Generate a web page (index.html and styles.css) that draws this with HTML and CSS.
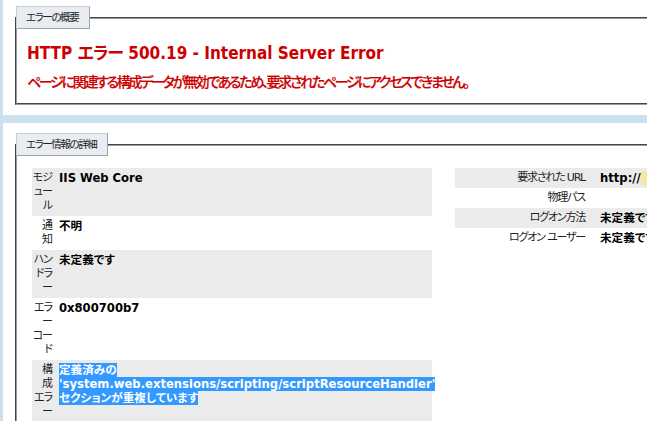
FILE: index.html
```html
<!DOCTYPE html>
<html lang="ja">
<head>
<meta charset="utf-8">
<title>IIS 詳細エラー - 500.19 - Internal Server Error</title>
<link rel="stylesheet" href="styles.css">
</head>
<body>
<div class="content">
  <div class="summary-container">
    <fieldset class="summary">
      <legend>エラーの概要</legend>
      <h2>HTTP <span class="jp">エラー</span> 500.19 - Internal Server Error</h2>
      <h3>ページに関連する構成データが無効であるため、要求されたページにアクセスできません。</h3>
    </fieldset>
  </div>
  <div class="content-container">
    <fieldset class="detail">
      <legend>エラー情報の詳細</legend>
      <div class="details">
        <div class="details-left">
          <table>
            <tr class="alt"><th>モジ<br>ュー<br>ル</th><td>IIS Web Core</td></tr>
            <tr><th>通<br>知</th><td>不明</td></tr>
            <tr class="alt"><th>ハン<br>ドラ<br>ー</th><td>未定義です</td></tr>
            <tr><th>エラ<br>ー<br>コー<br>ド</th><td>0x800700b7</td></tr>
            <tr class="alt"><th>構<br>成<br>エラ<br>ー</th><td class="keep"><span class="sel">定義済みの <span class="nw">'system.web.extensions/scripting/scriptResourceHandler'</span> セクションが重複しています</span></td></tr>
          </table>
        </div>
        <div class="details-right">
          <table>
            <tr class="alt"><th>要求された URL</th><td>http://<span class="redact">&nbsp;&nbsp;&nbsp;&nbsp;&nbsp;&nbsp;&nbsp;&nbsp;&nbsp;&nbsp;</span></td></tr>
            <tr><th>物理パス</th><td></td></tr>
            <tr class="alt"><th>ログオン方法</th><td>未定義です</td></tr>
            <tr><th>ログオン ユーザー</th><td>未定義です</td></tr>
          </table>
        </div>
      </div>
    </fieldset>
  </div>
</div>
</body>
</html>
```
FILE: styles.css
```css
html, body {
  margin: 0;
  padding: 0;
  overflow: hidden;
}
body {
  background: #cbe1ef;
  font-family: "DejaVu Sans", "Noto Sans CJK JP", sans-serif;
  font-size: 11px;
  color: #000;
  font-feature-settings: "palt";
}
.content {
  margin-left: 3px;
  width: 1200px;
}
.summary-container,
.content-container {
  background: #fff;
  padding: 10px;
}
.summary-container {
  padding-top: 6px;
}
.content-container {
  margin-top: 8px;
}
fieldset {
  margin: 0 2px;
  padding: 0 15px 10px 15px;
  border: 2px groove #9a9a9a;
}
fieldset.summary {
  padding: 0 10px 12px 10px;
}
legend {
  margin: 0 0 8px -16px;
  padding: 2px 11px 4px 9px;
  background: #e9edf1;
  border: 1px solid #c9ced3;
  border-right-color: #9da3a9;
  border-bottom-color: #9da3a9;
  color: #222;
  font-family: "Noto Sans CJK JP", sans-serif;
  font-size: 10.5px;
  line-height: 15px;
  letter-spacing: -1.4px;
}
fieldset.summary legend {
  margin-left: -11px;
}
h2 {
  margin: 4px 0 0 0;
  font-family: "DejaVu Sans Condensed", "DejaVu Sans", "Noto Sans CJK JP", sans-serif;
  font-size: 17px;
  line-height: 21px;
  font-weight: bold;
  color: #cc0000;
}
h2 .jp {
  font-family: "Noto Sans CJK JP", sans-serif;
  letter-spacing: -1px;
}
h3 {
  margin: 8px 0 0 0;
  font-family: "Noto Sans CJK JP", sans-serif;
  font-size: 14px;
  line-height: 19px;
  font-weight: 500;
  color: #cc0000;
  letter-spacing: -2.3px;
  -webkit-text-stroke: 0.2px #cc0000;
}
.details {
  display: flex;
  align-items: flex-start;
  gap: 23px;
}
.details-left {
  width: 400px;
  flex: none;
}
.details-right {
  width: 720px;
  flex: none;
}
table {
  width: 100%;
  margin: 4px 0;
  border-collapse: collapse;
  border-spacing: 0;
  table-layout: fixed;
}
th, td {
  vertical-align: top;
  padding: 3px 0;
  line-height: 14px;
  text-align: left;
}
th {
  text-align: right;
  font-weight: normal;
  color: #222;
  white-space: nowrap;
}
td {
  font-weight: bold;
  font-size: 11.6px;
}
.details-left th {
  width: 20px;
  padding-right: 7px;
  letter-spacing: -1px;
}
.details-right th {
  width: 130px;
  padding-right: 15px;
  letter-spacing: -1.2px;
}
tr.alt th,
tr.alt td {
  background: #ebebeb;
}
.details-right td {
  white-space: nowrap;
  overflow: hidden;
}
.keep {
  word-break: keep-all;
}
.sel {
  background: #3399ff;
  color: #fff;
}
.nw {
  white-space: nowrap;
}
.redact {
  background: #f5e7a0;
}
```
